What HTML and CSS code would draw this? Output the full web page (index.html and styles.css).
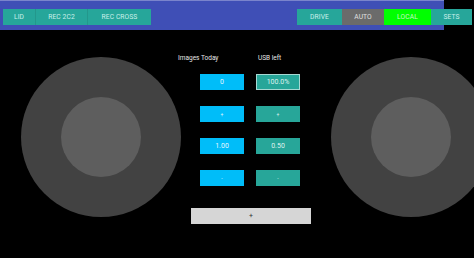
FILE: index.html
```html
<!DOCTYPE html>
<html>
<head>
<meta charset="utf-8">
<link rel="stylesheet" href="styles.css">
</head>
<body>
<div class="app">
  <header class="topbar">
    <div class="toolrow">
      <div class="group">
        <div class="tab w-lid">LID</div>
        <div class="tab w-2c2">REC 2C2</div>
        <div class="tab w-cross">REC CROSS</div>
      </div>
      <div class="group">
        <div class="tab w-drive">DRIVE</div>
        <div class="tab w-auto auto">AUTO</div>
        <div class="tab w-local local">LOCAL</div>
        <div class="tab w-sets">SETS</div>
      </div>
    </div>
  </header>
  <main class="main">
    <div class="stick stick-left"><div class="knob"></div></div>
    <div class="panel">
      <div class="labels">
        <span>Images Today</span>
        <span>USB left</span>
      </div>
      <div class="grid">
        <div class="btn cyan">0</div>
        <div class="btn teal focus">100.0%</div>
        <div class="btn cyan small">+</div>
        <div class="btn teal small">+</div>
        <div class="btn cyan">1.00</div>
        <div class="btn teal">0.50</div>
        <div class="btn cyan small">-</div>
        <div class="btn teal small">-</div>
      </div>
      <div class="wide">+</div>
    </div>
    <div class="stick stick-right"><div class="knob"></div></div>
  </main>
</div>
</body>
</html>
```

FILE: styles.css
```css
html, body {
  margin: 0;
  padding: 0;
  background: #000;
  width: 474px;
  height: 258px;
  overflow: hidden;
  font-family: Roboto, "Noto Sans", sans-serif;
}

.app {
  width: 474px;
  height: 258px;
  position: relative;
}

.topbar {
  width: 441px;
  height: 29px;
  background: #3f4fb6;
  border-top: 1px solid #7a84cc;
  padding-left: 3px;
  box-sizing: content-box;
}

.toolrow {
  width: 469px;
  padding-top: 8px;
  display: flex;
  justify-content: space-between;
}

.group {
  display: flex;
}

.tab {
  height: 16px;
  line-height: 16px;
  font-size: 6.7px;
  color: #c9efe9;
  text-align: center;
  background: #26a69a;
  border-right: 1px solid #23978c;
  box-sizing: border-box;
  letter-spacing: 0.1px;
}

.w-lid { width: 33px; }
.w-2c2 { width: 52px; }
.w-cross { width: 63px; border-right: none; }
.w-drive { width: 45px; border-right: none; }
.w-auto { width: 42px; border-right: none; }
.w-local { width: 47px; border-right: none; }
.w-sets { width: 41px; border-right: none; }

.auto { background: #6b6b6b; color: #e0e0e0; }
.local { background: #00ff00; color: #c8f7c8; }

.main {
  display: flex;
  align-items: flex-start;
  padding-left: 21px;
}

.stick {
  flex: none;
  width: 160px;
  height: 160px;
  border-radius: 50%;
  background: #424242;
  margin-top: 27px;
  display: flex;
  align-items: center;
  justify-content: center;
}

.knob {
  width: 80px;
  height: 80px;
  border-radius: 50%;
  background: #5e5e5e;
}

.panel {
  flex: none;
  width: 150px;
  padding-top: 23px;
}

.labels {
  display: grid;
  grid-template-columns: 80px 60px;
  margin-left: -3px;
  height: 10px;
  line-height: 10px;
  font-size: 6.5px;
  color: #e6e6e6;
}

.grid {
  display: grid;
  grid-template-columns: 44px 44px;
  column-gap: 12px;
  row-gap: 16px;
  margin-top: 11px;
  margin-left: 19px;
}

.btn {
  height: 16px;
  line-height: 16px;
  font-size: 7px;
  text-align: center;
  color: #eaf8ff;
  box-sizing: border-box;
}

.btn.small { font-size: 5px; }

.cyan { background: #00bdf9; }
.teal { background: #27a699; color: #dff3f0; }
.focus {
  border: 1px solid #a6d8d2;
  line-height: 14px;
}

.wide {
  margin-top: 22px;
  margin-left: 10px;
  width: 120px;
  height: 16px;
  line-height: 16px;
  background: #d6d6d6;
  color: #333;
  text-align: center;
  font-size: 7px;
}
```
